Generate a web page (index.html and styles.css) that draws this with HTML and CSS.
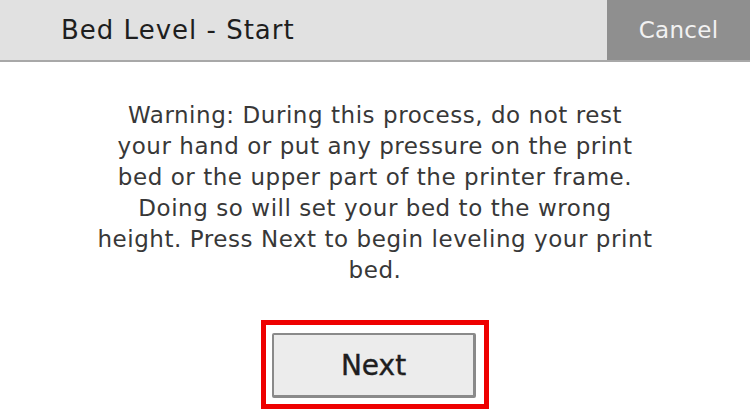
FILE: index.html
```html
<!DOCTYPE html>
<html>
<head>
<meta charset="utf-8">
<link rel="stylesheet" href="styles.css">
</head>
<body>
<div class="screen">
  <header class="topbar">
    <h1 class="title">Bed Level - Start</h1>
    <button class="cancel">Cancel</button>
  </header>
  <main class="content">
    <p class="message">Warning: During this process, do not rest<br>your hand or put any pressure on the print<br>bed or the upper part of the printer frame.<br>Doing so will set your bed to the wrong<br>height. Press Next to begin leveling your print<br>bed.</p>
    <div class="highlight">
      <button class="next">Next</button>
    </div>
  </main>
</div>
</body>
</html>
```
FILE: styles.css
```css
html, body {
  margin: 0;
  padding: 0;
  background: #fff;
}

.screen {
  width: 750px;
  height: 411px;
  display: flex;
  flex-direction: column;
  font-family: "DejaVu Sans", sans-serif;
  overflow: hidden;
}

.topbar {
  height: 60px;
  display: flex;
  align-items: stretch;
  background: #e1e1e1;
  border-bottom: 2px solid #a8a8a8;
}

.title {
  flex: 1;
  margin: 0;
  padding-left: 61px;
  font-size: 26px;
  font-weight: normal;
  letter-spacing: 1px;
  color: #1e1e1e;
  line-height: 60px;
}

.cancel {
  width: 143px;
  border: none;
  background: #8f8f8f;
  color: #f2f2f2;
  font-family: inherit;
  font-size: 23px;
  letter-spacing: 0.3px;
  padding: 0;
}

.content {
  display: flex;
  flex-direction: column;
  align-items: center;
}

.message {
  margin: 38px 0 0;
  text-align: center;
  font-size: 23px;
  letter-spacing: 0.55px;
  line-height: 31px;
  color: #383838;
}

.highlight {
  margin-top: 34px;
  border: 5px solid #ee0000;
  padding: 8px 8px 6px 6px;
}

.next {
  display: block;
  width: 204px;
  height: 65px;
  background: #ececec;
  border: 2px solid #8a8a8a;
  border-bottom-width: 3px;
  border-right-width: 3px;
  border-radius: 2px;
  font-family: inherit;
  font-size: 28px;
  -webkit-text-stroke: 0.4px #1e1e1e;
  color: #1e1e1e;
  padding: 0;
}
```
